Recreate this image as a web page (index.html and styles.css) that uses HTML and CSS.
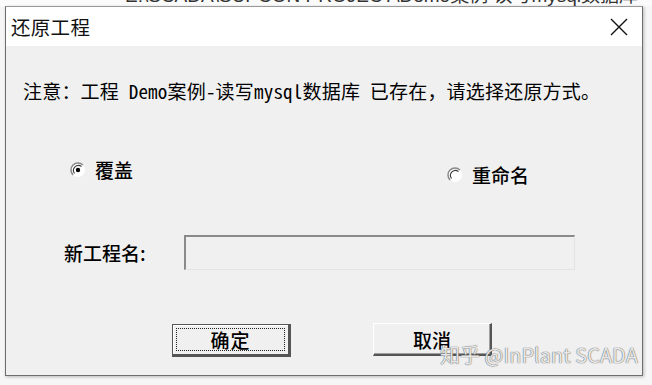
FILE: index.html
```html
<!DOCTYPE html>
<html lang="zh">
<head>
<meta charset="utf-8">
<title>还原工程</title>
<link rel="stylesheet" href="styles.css">
</head>
<body>
<div class="desk">
  <div class="bgstrip"><span class="bgtext">E:\SCADA\SUPCON PROJECT\Demo案例 读写mysql数据库</span></div>
  <div class="dialog">
    <div class="titlebar">
      <span class="title">还原工程</span>
      <svg class="close" width="18" height="18" viewBox="0 0 18 18"><path d="M1 1L17 17M17 1L1 17" stroke="#111" stroke-width="1.4" fill="none"/></svg>
    </div>
    <div class="content">
      <div class="msg">注意：工程 Demo案例-读写mysql数据库 已存在，请选择还原方式。</div>
      <div class="radios">
        <div class="radio r1">
          <svg width="16" height="16" viewBox="0 0 16 16"><circle cx="8" cy="8" r="7" fill="#fff"/><path d="M12.95 3.05A7 7 0 0 0 3.05 12.95" stroke="#8a8a8a" stroke-width="1.5" fill="none"/><path d="M11.5 4.5A5 5 0 0 0 4.5 11.5" stroke="#3c3c3c" stroke-width="1.1" fill="none"/><circle cx="8" cy="8" r="2.2" fill="#000"/></svg>
          <span>覆盖</span>
        </div>
        <div class="radio r2">
          <svg width="16" height="16" viewBox="0 0 16 16"><circle cx="8" cy="8" r="7" fill="#fff"/><path d="M12.95 3.05A7 7 0 0 0 3.05 12.95" stroke="#8a8a8a" stroke-width="1.5" fill="none"/><path d="M11.5 4.5A5 5 0 0 0 4.5 11.5" stroke="#3c3c3c" stroke-width="1.1" fill="none"/></svg>
          <span>重命名</span>
        </div>
      </div>
      <div class="namerow">
        <span class="lbl">新工程名:</span>
        <div class="field"></div>
      </div>
      <div class="buttons">
        <div class="btn ok"><span class="focus">确定</span></div>
        <div class="btn cancel"><span>取消</span></div>
      </div>
    </div>
  </div>
  <div class="bottomstrip"></div>
  <div class="watermark">知乎 @InPlant SCADA</div>
</div>
</body>
</html>
```
FILE: styles.css
```css
* { box-sizing: border-box; }
html, body { margin: 0; padding: 0; }
body {
  width: 652px;
  height: 385px;
  overflow: hidden;
  background: #f4f4f4;
  font-family: "Noto Sans CJK SC", sans-serif;
}
.desk {
  position: relative;
  width: 652px;
  height: 385px;
  background: #f6f6f6;
}
.bgstrip {
  height: 6px;
  overflow: hidden;
  background: #fbfbfb;
}
.bgtext {
  display: block;
  margin-top: -14px;
  padding-left: 125px;
  font-family: "Liberation Sans", "Noto Sans CJK SC", sans-serif;
  font-size: 19px;
  line-height: 20px;
  color: #333;
  white-space: nowrap;
}
.dialog {
  margin-left: 5px;
  width: 638px;
  height: 370px;
  border: 1px solid #6e6e6e;
  border-top-color: #9a9a9a;
  box-shadow: 1px 1px 3px rgba(0,0,0,0.25);
  background: #f0f0f0;
  display: flex;
  flex-direction: column;
}
.titlebar {
  height: 39px;
  background: #fff;
  display: flex;
  align-items: center;
  justify-content: space-between;
  padding: 0 14px 0 5px;
}
.title {
  font-size: 19.5px;
  color: #111;
  letter-spacing: 0.3px;
}
.close { display: block; margin-top: 1px; }
.content {
  flex: 1;
  padding: 35px 0 0 17px;
  font-size: 19px;
  font-weight: 500;
  color: #000;
}
.msg {
  line-height: 20px;
  white-space: nowrap;
  font-family: "Noto Sans Mono CJK SC", "Noto Sans CJK SC", monospace;
  letter-spacing: 0.2px;
}
.radios {
  display: flex;
  margin-top: 59px;
  height: 34px;
}
.radio {
  display: flex;
  align-items: center;
  gap: 9px;
  line-height: 20px;
  align-self: flex-start;
}
.radio svg { display: block; }
.r1 { margin-left: 47px; }
.r2 { margin-left: 314px; margin-top: 5px; }
.namerow {
  display: flex;
  align-items: center;
  margin-top: 41px;
  height: 35px;
}
.lbl {
  margin-left: 41px;
  width: 120px;
}
.field {
  width: 391px;
  height: 35px;
  background: #f0f0f0;
  border-top: 2px solid #8a8a8a;
  border-left: 2px solid #8a8a8a;
  border-right: 1px solid #e4e4e4;
  border-bottom: 1px solid #e4e4e4;
}
.buttons {
  display: flex;
  margin-top: 54px;
}
.btn {
  width: 119px;
  height: 33px;
  background: #f0f0f0;
  display: flex;
  align-items: center;
  justify-content: center;
  font-size: 19px;
}
.ok {
  margin-left: 149px;
  border: 1px solid #555;
  border-right: 3px solid #555;
  border-bottom: 3px solid #555;
  box-shadow: inset 1px 1px 0 #fff;
  padding: 3px;
}
.ok .focus {
  display: flex;
  align-items: center;
  justify-content: center;
  width: 100%;
  height: 100%;
  border: 1px dotted #222;
  letter-spacing: 1px;
}
.cancel {
  margin-left: 82px;
  margin-top: -1px;
  border-top: 1px solid #fff;
  border-left: 1px solid #fff;
  border-right: 2px solid #555;
  border-bottom: 2px solid #555;
  box-shadow: inset -1px -1px 0 #a0a0a0;
}
.bottomstrip {
  height: 9px;
}
.watermark {
  position: absolute;
  left: 440px;
  top: 343px;
  font-family: "Noto Sans CJK SC", "Open Sans", sans-serif;
  font-size: 20px;
  font-weight: 400;
  line-height: 24px;
  color: rgba(255,255,255,0.85);
  text-shadow: 0 0 1px #666, 0 0 1px #666;
  white-space: nowrap;
}
```
